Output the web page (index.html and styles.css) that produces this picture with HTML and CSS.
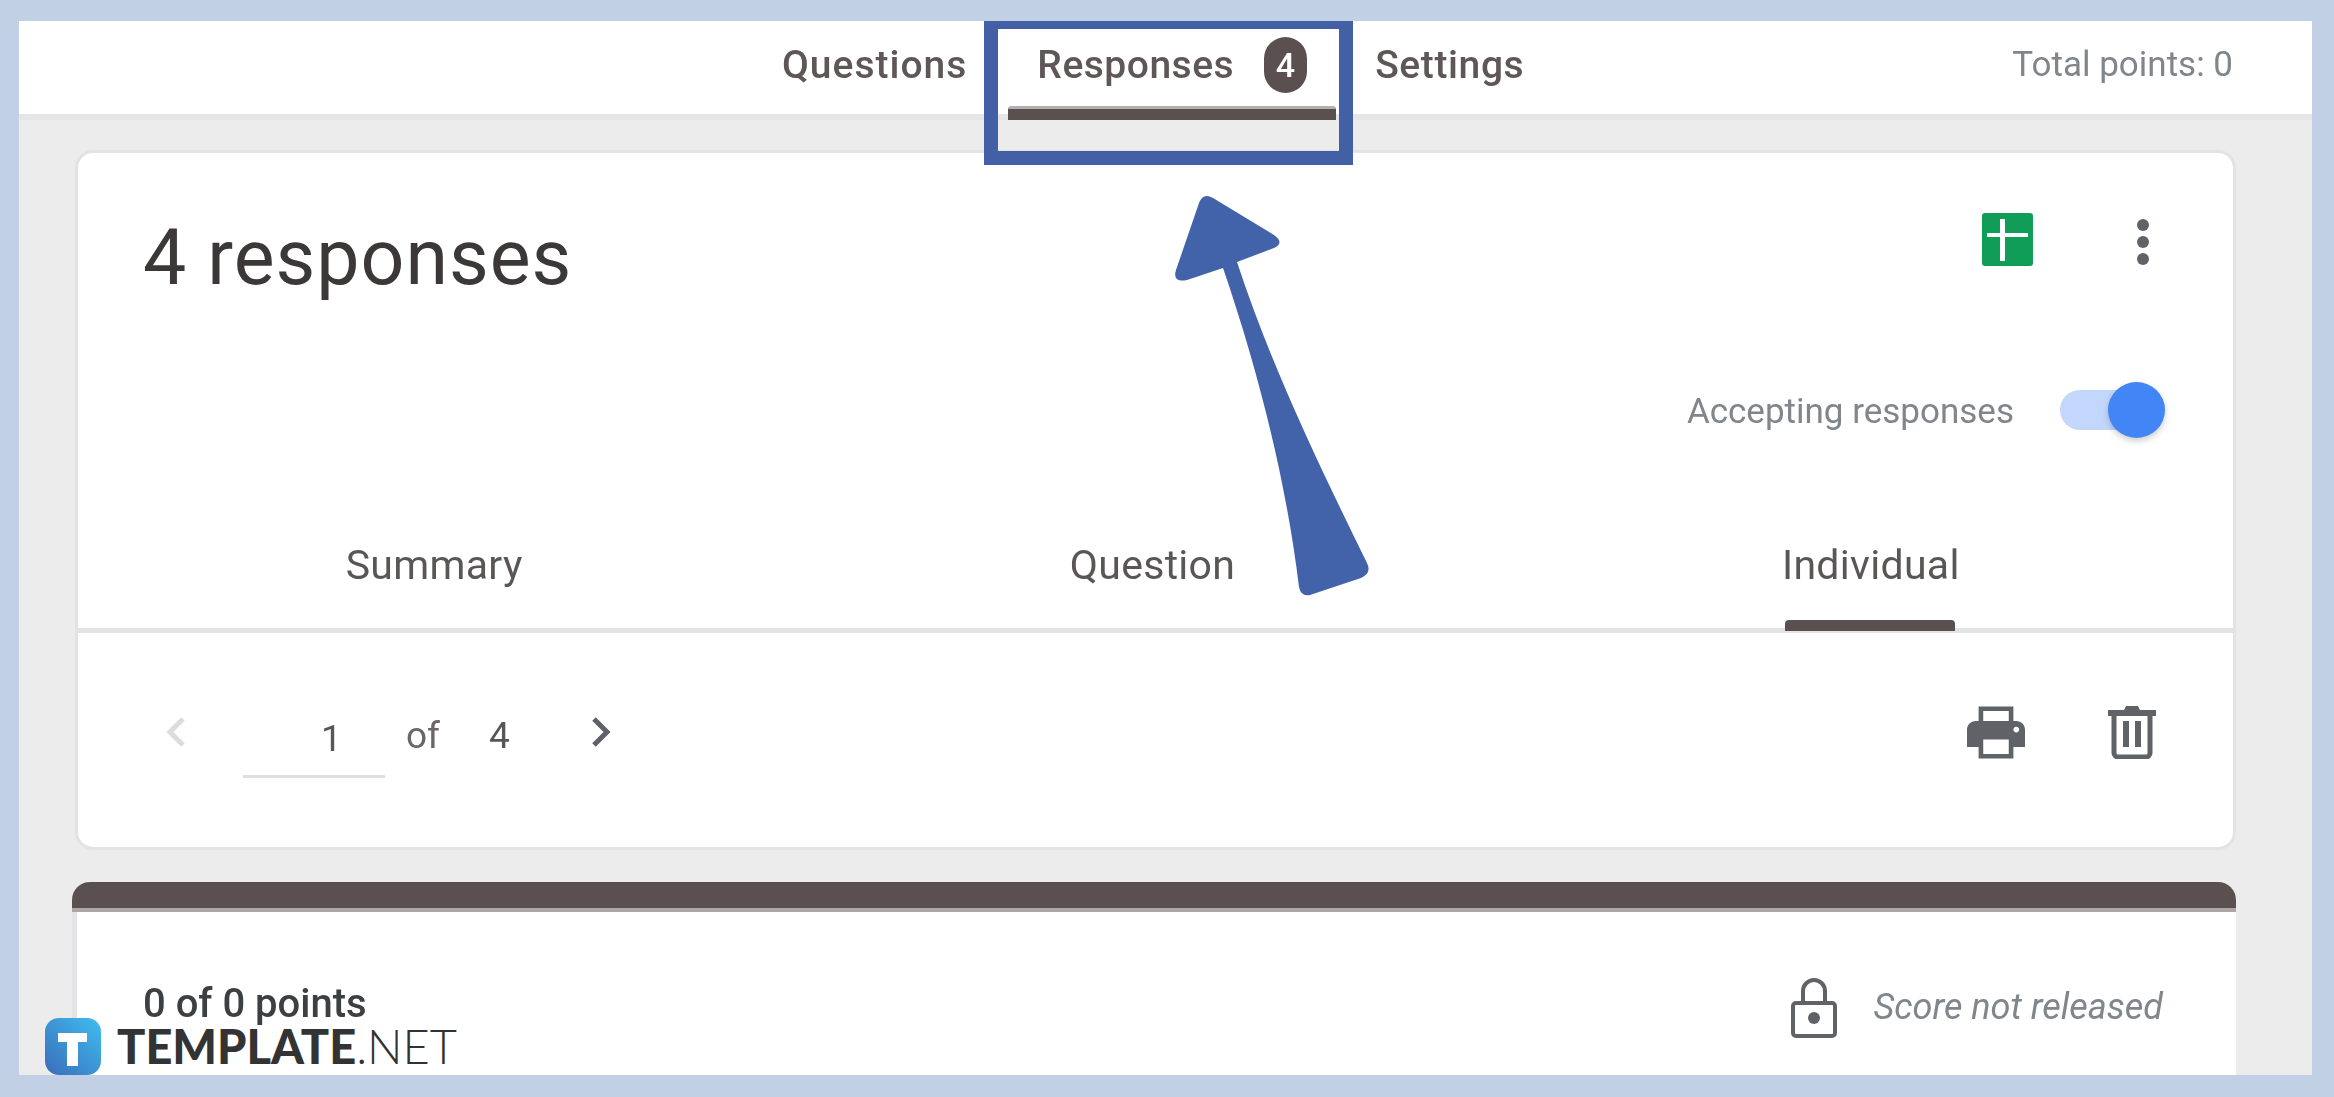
FILE: index.html
```html
<!DOCTYPE html>
<html>
<head>
  <title>Form responses</title>
  <link rel="stylesheet" href="styles.css">
</head>
<body>

<div class="shot">
  <div class="frame">
    <header class="topbar">
      <nav class="topbar-tabs">
        <span class="top-tab">Questions</span>
        <span class="top-tab top-tab-active">Responses <span class="badge">4</span></span>
        <span class="top-tab top-tab-last">Settings</span>
      </nav>
      <span class="total">Total points: 0</span>
    </header>

    <main class="content">
      <section class="card">
        <div class="card-head">
          <div class="title-row">
            <h1 class="title">4 responses</h1>
            <div class="title-actions">
              <svg class="sheet-icon" viewBox="0 0 51 53">
                <rect width="51" height="53" rx="3" fill="#0f9d58"/>
                <path d="M18 6h5v14h23v4H23v24h-5V24H5v-4h13z" fill="#fff"/>
              </svg>
              <svg class="kebab-icon" viewBox="0 0 14 48">
                <circle cx="7" cy="7" r="6" fill="#5f6368"/>
                <circle cx="7" cy="24" r="6" fill="#5f6368"/>
                <circle cx="7" cy="41" r="6" fill="#5f6368"/>
              </svg>
            </div>
          </div>
          <div class="accept-row">
            <span class="accept-label">Accepting responses</span>
            <span class="toggle"><span class="toggle-thumb"></span></span>
          </div>
          <div class="view-tabs">
            <span class="view-tab">Summary</span>
            <span class="view-tab">Question</span>
            <span class="view-tab view-tab-active">Individual</span>
          </div>
        </div>

        <div class="pager">
          <svg class="chevron chevron-prev" viewBox="0 0 21 32">
            <path d="M18 3 5 16l13 13" fill="none" stroke="#dadce0" stroke-width="5"/>
          </svg>
          <span class="page-input">1</span>
          <span class="page-of">of</span>
          <span class="page-total">4</span>
          <svg class="chevron chevron-next" viewBox="0 0 21 32">
            <path d="M3 3l13 13L3 29" fill="none" stroke="#5f6368" stroke-width="5"/>
          </svg>
          <svg class="print-icon" viewBox="2 3 20 18">
            <path d="M6 3h12v5h-1.6V4.6H7.6V8H6z" fill="#5f6368"/>
            <path d="M19 8H5c-1.66 0-3 1.34-3 3v6h4v4h12v-4h4v-6c0-1.66-1.34-3-3-3zm-2.6 11.4H7.6v-5h8.8v5zM19 12c-.55 0-1-.45-1-1s.45-1 1-1 1 .45 1 1-.45 1-1 1z" fill="#5f6368"/>
          </svg>
          <svg class="trash-icon" viewBox="0 0 48 53">
            <path d="M0 4h16l2-4h12l2 4h16v6H0z" fill="#5f6368"/>
            <path d="M6 9v38a4 4 0 0 0 4 4h28a4 4 0 0 0 4-4V9" fill="none" stroke="#5f6368" stroke-width="5"/>
            <path d="M15 15h6v26h-6zM27 15h6v26h-6z" fill="#5f6368"/>
          </svg>
        </div>
      </section>

      <section class="score-card">
        <div class="score-bar"></div>
        <div class="score-row">
          <span class="score-points">0 of 0 points</span>
          <svg class="lock-icon" viewBox="0 0 46 61">
            <path d="M12 27V14a11 11 0 0 1 22 0v13" fill="none" stroke="#5f6368" stroke-width="4"/>
            <rect x="2" y="26" width="42" height="33" rx="3" fill="none" stroke="#5f6368" stroke-width="4"/>
            <circle cx="23" cy="41" r="6" fill="#5f6368"/>
          </svg>
          <span class="score-note">Score not released</span>
        </div>
      </section>
    </main>
  </div>

  <div class="callout-box"></div>
  <svg class="callout-arrow" viewBox="0 0 2334 1097">
    <path d="M1199 203Q1203 192 1213 198L1274 235Q1285 243 1274 248L1237 262C1272 368 1318 463 1367 563Q1372 573 1361 578L1310 595Q1301 597 1299 587C1286 480 1258 370 1223 268L1187 280Q1172 283 1176 270Z" fill="#4262a9"/>
  </svg>

  <div class="watermark">
    <span class="watermark-logo">
      <svg viewBox="0 0 56 57">
        <path d="M13 15h29v9H33v24H22V24h-9z" fill="#fff"/>
      </svg>
    </span>
    <span class="watermark-name">TEMPLATE<span class="watermark-tld">.NET</span></span>
  </div>
</div>

</body>
</html>
```

FILE: styles.css
```css
* {
  box-sizing: border-box;
}

body {
  margin: 0;
  font-family: Roboto, "Liberation Sans", sans-serif;
  color: #5f6368;
}

.shot {
  position: relative;
  width: 2334px;
  height: 1097px;
  padding: 21px 22px 22px 19px;
  background-color: #c1d0e5;
  overflow: hidden;
}

.frame {
  height: 1054px;
  background-color: #ececec;
  overflow: hidden;
  filter: blur(0.7px);
}

/* top bar */
.topbar {
  display: flex;
  align-items: center;
  height: 99px;
  padding: 0 79px 6px 763px;
  background-color: #fff;
  border-bottom: 6px solid #e6e6e8;
}

.topbar-tabs {
  display: flex;
  align-items: center;
}

.top-tab {
  position: relative;
  display: flex;
  align-items: center;
  font-size: 39px;
  font-weight: 500;
  letter-spacing: 1px;
  color: #5f5757;
}

.top-tab-active {
  margin-left: 70px;
  gap: 30px;
  letter-spacing: 0.5px;
}

.top-tab-active::after {
  content: "";
  position: absolute;
  left: -29px;
  top: 69px;
  width: 328px;
  height: 11px;
  border-top: 3px solid #b5b0b0;
  border-radius: 3px 3px 0 0;
  background-color: #5a5050;
}

.top-tab-last {
  margin-left: 68px;
  letter-spacing: 0.6px;
}

.badge {
  display: flex;
  align-items: center;
  justify-content: center;
  width: 43px;
  height: 56px;
  border-radius: 22px;
  background-color: #5a5050;
  color: #fff;
  font-size: 34px;
}

.total {
  margin-left: auto;
  font-size: 35px;
  color: #80868b;
}

/* cards */
.content {
  padding: 30px 76px 0 53px;
}

.card {
  margin-left: 3px;
  height: 700px;
  background-color: #fff;
  border: 3px solid #e3e3e6;
  border-radius: 18px;
}

.card-head {
  height: 480px;
  border-bottom: 5px solid #e2e3e6;
}

.title-row {
  display: flex;
  justify-content: space-between;
  align-items: flex-start;
  height: 167px;
  padding: 60px 83px 0 65px;
}

.title {
  margin: 0;
  font-size: 77px;
  font-weight: 400;
  line-height: 90px;
  letter-spacing: 1px;
  color: #3c3838;
}

.title-actions {
  display: flex;
  align-items: flex-start;
  gap: 103px;
}

.sheet-icon {
  width: 51px;
  height: 53px;
}

.kebab-icon {
  width: 14px;
  height: 48px;
  margin-top: 5px;
}

.accept-row {
  display: flex;
  justify-content: flex-end;
  align-items: center;
  gap: 46px;
  height: 60px;
  margin-top: 60px;
  padding-right: 93px;
}

.accept-label {
  margin-top: 3px;
  font-size: 35px;
  color: #80868b;
}

.toggle {
  position: relative;
  display: block;
  width: 80px;
  height: 40px;
  border-radius: 20px;
  background-color: #c2d7fb;
}

.toggle-thumb {
  position: absolute;
  right: -25px;
  top: -8px;
  width: 57px;
  height: 56px;
  border-radius: 50%;
  background-color: #4285f4;
  box-shadow: 0 3px 6px rgba(0, 0, 0, 0.2);
}

.view-tabs {
  display: grid;
  grid-template-columns: repeat(3, 1fr);
  height: 188px;
  padding-top: 75px;
  margin-left: -3px;
  margin-right: 3px;
}

.view-tab {
  position: relative;
  justify-self: center;
  align-self: start;
  font-size: 41px;
  line-height: 100px;
  letter-spacing: 0.3px;
  color: #5a5656;
}

.view-tab-active::after {
  content: "";
  position: absolute;
  left: 3px;
  right: 5px;
  top: 105px;
  height: 11px;
  border-radius: 4px 4px 0 0;
  background-color: #5a5050;
}

/* pager row */
.pager {
  display: flex;
  align-items: center;
  height: 214px;
  padding: 0 77px 16px 87px;
}

.chevron {
  width: 21px;
  height: 32px;
  flex: none;
}

.page-input {
  width: 142px;
  height: 62px;
  margin-left: 57px;
  padding-left: 78px;
  margin-top: 30px;
  border-bottom: 3px solid #dedede;
  font-size: 37px;
  line-height: 46px;
  color: #5a5656;
}

.page-of {
  margin-left: 21px;
  margin-top: 6px;
  font-size: 37px;
  color: #6a6666;
}

.page-total {
  margin-left: 49px;
  margin-top: 6px;
  font-size: 37px;
  color: #5a5656;
}

.chevron-next {
  margin-left: 81px;
}

.print-icon {
  width: 58px;
  height: 53px;
  margin-left: auto;
}

.trash-icon {
  width: 48px;
  height: 53px;
  margin-left: 83px;
}

.score-card {
  position: relative;
  height: 300px;
  margin-top: 32px;
  background-color: #fff;
  border-left: 5px solid #e3e3e6;
  border-radius: 18px 18px 0 0;
}

.score-bar {
  height: 30px;
  margin-left: -5px;
  background-color: #5a5050;
  border-bottom: 4px solid #aca7a7;
  border-radius: 18px 18px 0 0;
}

.score-row {
  display: flex;
  align-items: center;
  height: 190px;
  padding: 0 73px 0 66px;
}

.score-points {
  margin-right: auto;
  margin-bottom: 7px;
  font-size: 40px;
  font-weight: 500;
  color: #3c4043;
}

.lock-icon {
  width: 46px;
  height: 61px;
  margin-right: 37px;
}

.score-note {
  font-size: 36px;
  font-style: italic;
  color: #80868b;
}

/* annotation on top of the screenshot */
.callout-box {
  position: absolute;
  left: 984px;
  top: 21px;
  width: 369px;
  height: 144px;
  border-style: solid;
  border-color: #435fa6;
  border-width: 8px 14px 14px;
}

.callout-arrow {
  position: absolute;
  left: 0;
  top: 0;
  width: 2334px;
  height: 1097px;
}

.watermark {
  position: absolute;
  left: 45px;
  top: 1018px;
  display: flex;
  align-items: center;
  gap: 16px;
}

.watermark-logo {
  display: block;
  width: 56px;
  height: 57px;
  border-radius: 14px;
  background: linear-gradient(45deg, #3a6db8, #3fbdf1);
}

.watermark-logo svg {
  display: block;
  width: 56px;
  height: 57px;
}

.watermark-name {
  font-family: Lato, sans-serif;
  font-size: 47px;
  font-weight: 900;
  line-height: 57px;
  color: #333;
}

.watermark-tld {
  font-weight: 300;
}
```
